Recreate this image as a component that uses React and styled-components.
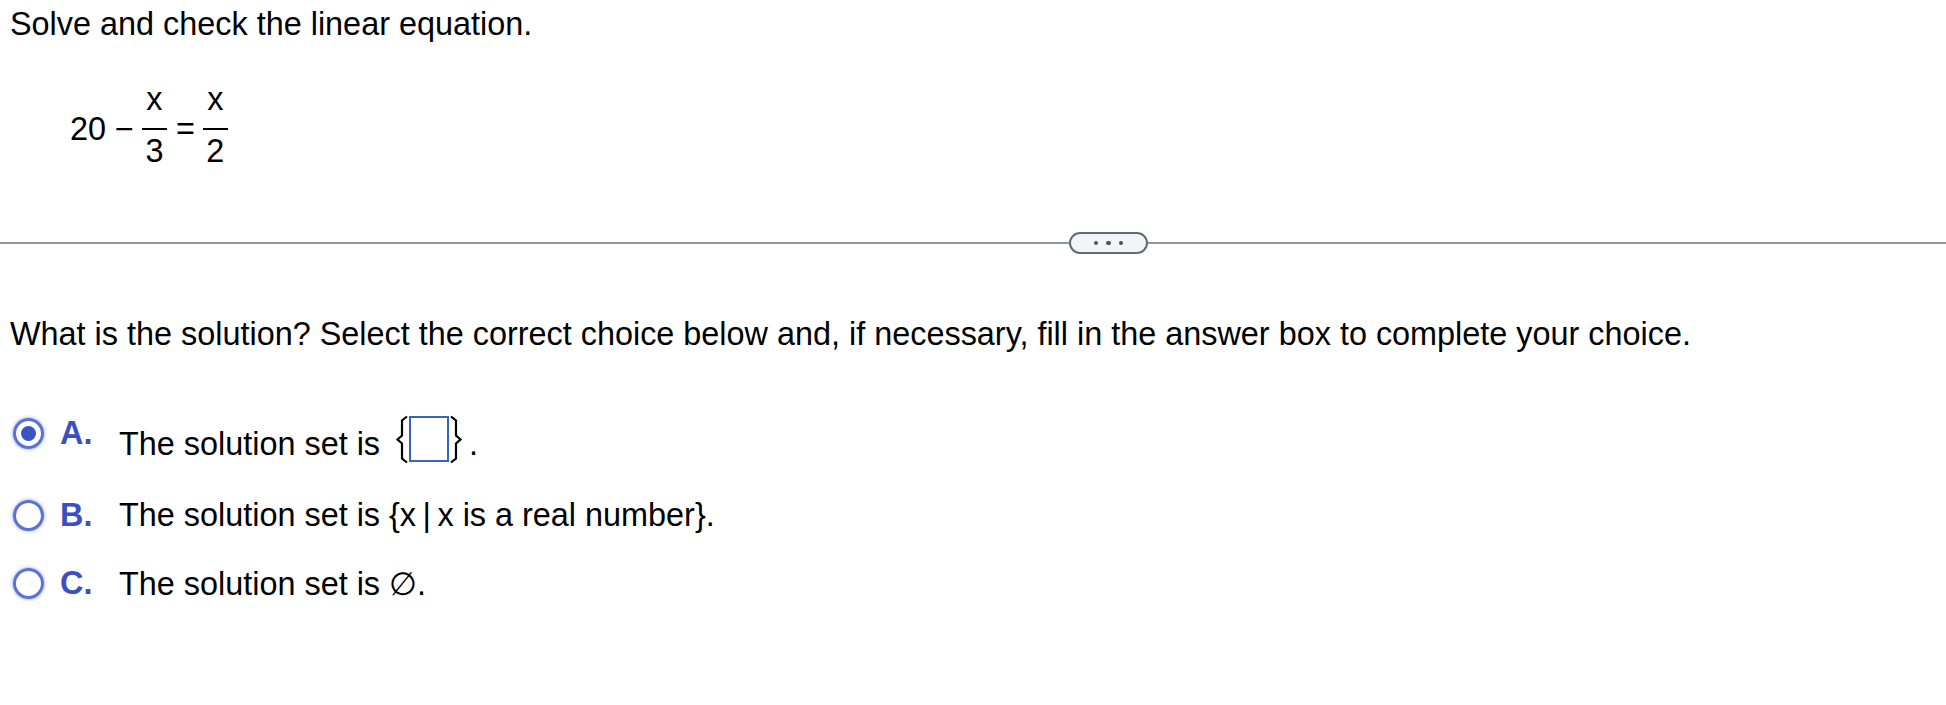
import React from "react";
import styled, { createGlobalStyle } from "styled-components";

const GlobalStyle = createGlobalStyle`
  html, body {
    margin: 0;
    padding: 0;
    background: #ffffff;
  }
  body {
    font-family: "Liberation Sans", Arial, sans-serif;
    font-size: 32.4px;
    color: #000000;
  }
`;

const choices = [
  { key: "A", selected: true, kind: "box" },
  { key: "B", selected: false, text: "The solution set is {x\u2009|\u2009x is a real number}." },
  { key: "C", selected: false, text: "The solution set is \u2205." },
];

export default function App() {
  return (
    <>
      <GlobalStyle />
      <Page>
        <Prompt>Solve and check the linear equation.</Prompt>
        <Equation>
          <Term>20</Term>
          <Operator>−</Operator>
          <Fraction top="x" bottom="3" />
          <Operator>=</Operator>
          <Fraction top="x" bottom="2" />
        </Equation>
      </Page>
      <Divider>
        <LeftRule />
        <MoreButton>
          <Dot />
          <Dot />
          <Dot />
        </MoreButton>
        <RightRule />
      </Divider>
      <Page>
        <Question>
          What is the solution? Select the correct choice below and, if necessary, fill in the answer box to complete
          your choice.
        </Question>
        <Choices>
          {choices.map((c) => (
            <ChoiceRow key={c.key}>
              <Marker>
                <Radio selected={c.selected} />
                <Letter>{c.key}.</Letter>
              </Marker>
              <ChoiceText>
                {c.kind === "box" ? (
                  <>
                    The solution set is
                    <AnswerSet>
                      <BraceRow>
                        <Brace />
                        <AnswerBox />
                        <Brace right />
                      </BraceRow>
                    </AnswerSet>
                    <Period>.</Period>
                  </>
                ) : (
                  c.text
                )}
              </ChoiceText>
            </ChoiceRow>
          ))}
        </Choices>
      </Page>
    </>
  );
}

function Fraction({ top, bottom }) {
  return (
    <FracWrap>
      <Numerator>{top}</Numerator>
      <FracLine />
      <Denominator>{bottom}</Denominator>
    </FracWrap>
  );
}

function Brace({ right }) {
  return (
    <BraceSvg viewBox="0 0 14 49" width="14" height="49" right={right}>
      <path
        d="M12 1.5 L7 5.5 L7 20.5 L2.5 24.5 L7 28.5 L7 43.5 L12 47.5"
        fill="none"
        stroke="#000"
        strokeWidth="2.2"
        strokeLinejoin="miter"
      />
    </BraceSvg>
  );
}

const Page = styled.div`
  padding: 6px 0 0 10px;
`;

const Prompt = styled.div`
  line-height: normal;
`;

const Equation = styled.div`
  display: flex;
  align-items: center;
  margin: 40px 0 0 60px;
`;

const Term = styled.span`
  line-height: 32px;
  margin-top: 8px;
  margin-right: 9px;
`;

const Operator = styled.span`
  line-height: 32px;
  margin: 8px 8px 0 0;
`;

const FracWrap = styled.span`
  display: inline-flex;
  flex-direction: column;
  align-items: center;
  margin-right: 9px;
`;

const Numerator = styled.span`
  line-height: 32px;
  margin-bottom: 13px;
`;

const FracLine = styled.span`
  align-self: stretch;
  height: 2px;
  background: #000;
  width: 25px;
`;

const Denominator = styled.span`
  line-height: 32px;
  margin-top: 5px;
`;

const Divider = styled.div`
  display: flex;
  align-items: center;
  margin-top: 65px;
`;

const LeftRule = styled.div`
  flex: 0 0 1069px;
  height: 2px;
  background: #8b95a3;
`;

const RightRule = styled.div`
  flex: 1;
  height: 2px;
  background: #8b95a3;
`;

const MoreButton = styled.div`
  box-sizing: border-box;
  width: 79px;
  height: 22px;
  border: 2px solid #5f6b79;
  border-radius: 11px;
  background: #f3f4f6;
  display: flex;
  align-items: center;
  justify-content: center;
  gap: 8px;
`;

const Dot = styled.span`
  width: 4.5px;
  height: 4.5px;
  border-radius: 50%;
  background: #4b525c;
`;

const Question = styled.div`
  margin-top: 56px;
  line-height: normal;
`;

const Choices = styled.div`
  margin-top: 62px;
  margin-left: 3px;
  display: flex;
  flex-direction: column;
  gap: 31px;
`;

const ChoiceRow = styled.div`
  display: flex;
  align-items: flex-start;
`;

const Marker = styled.div`
  display: flex;
  align-items: center;
  height: 37px;
  width: 106px;
  flex: 0 0 106px;
`;

const Radio = styled.span`
  box-sizing: border-box;
  width: 31px;
  height: 31px;
  border-radius: 50%;
  border: 3px solid #5a72d4;
  box-shadow: 0 0 0 1px rgba(90, 114, 212, 0.25), 0 0 0 3px rgba(200, 205, 215, 0.25);
  display: flex;
  align-items: center;
  justify-content: center;
  margin-right: 16px;

  &::after {
    content: "";
    display: ${({ selected }) => (selected ? "block" : "none")};
    width: 15px;
    height: 15px;
    border-radius: 50%;
    background: #3a54c6;
  }
`;

const Letter = styled.span`
  font-weight: bold;
  color: #3b4fc3;
  line-height: normal;
`;

const ChoiceText = styled.div`
  line-height: normal;
`;

const AnswerSet = styled.span`
  display: inline-block;
  overflow: hidden;
  height: 49px;
  margin: 0 0 2px 15px;
  vertical-align: -11.5px;
`;

const BraceRow = styled.span`
  display: flex;
  align-items: stretch;
  height: 49px;
`;

const BraceSvg = styled.svg`
  display: block;
  transform: ${({ right }) => (right ? "scaleX(-1)" : "none")};
`;

const AnswerBox = styled.span`
  box-sizing: border-box;
  width: 40px;
  height: 46px;
  margin-top: 1px;
  border: 2px solid #3464c5;
  background: #fff;
`;

const Period = styled.span`
  margin-left: 6px;
`;
